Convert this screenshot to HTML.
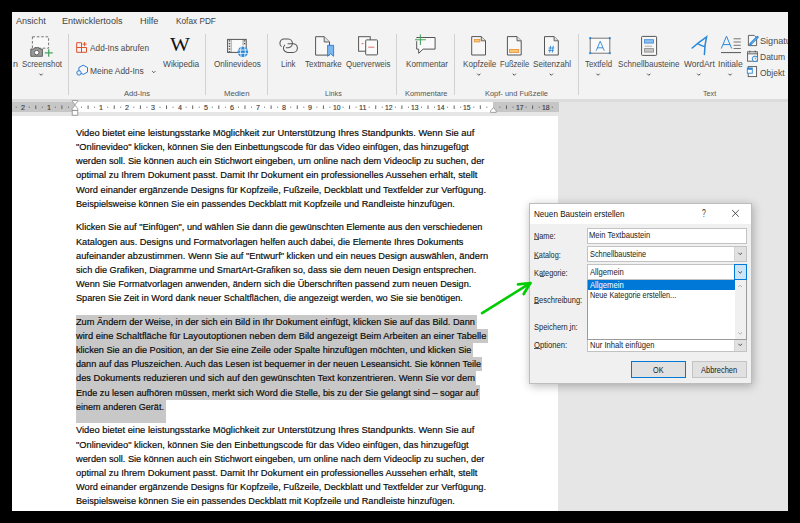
<!DOCTYPE html>
<html><head><meta charset="utf-8">
<style>
html,body{margin:0;padding:0;}
body{width:800px;height:523px;background:#000;position:relative;overflow:hidden;font-family:"Liberation Sans",sans-serif;}
.a{position:absolute;}
.t{position:absolute;white-space:pre;transform-origin:0 0;font-family:"Liberation Sans",sans-serif;}
.sep{position:absolute;width:1px;background:#d2d2d2;top:34px;height:61px;}
svg{position:absolute;overflow:visible;}
</style></head><body>
<!-- window -->
<div class="a" style="left:12px;top:12px;width:776px;height:499px;background:#f3f3f3;overflow:hidden"></div>
<!-- doc area -->
<div class="a" style="left:12px;top:99px;width:776px;height:412px;background:#e6e6e6"></div>
<!-- ruler top band -->
<div class="a" style="left:12px;top:99px;width:776px;height:3px;background:#dcdcdc"></div>
<!-- ruler body -->
<div class="a" style="left:12px;top:102px;width:546.5px;height:10px;background:#c6c6c6"></div>
<div class="a" style="left:75px;top:102px;width:418.4px;height:10px;background:#fff"></div>
<!-- page -->
<div class="a" style="left:12px;top:115.7px;width:546px;height:395.3px;background:#fff"></div>
<!-- separators -->
<div class="sep" style="left:68px"></div>
<div class="sep" style="left:205px"></div>
<div class="sep" style="left:267px"></div>
<div class="sep" style="left:396px"></div>
<div class="sep" style="left:454px"></div>
<div class="sep" style="left:578px"></div>
<div style='position:absolute;left:75.75px;top:314.64px;width:401.15px;height:14.17px;background:#c8c8c8'></div><div style='position:absolute;left:75.75px;top:328.81px;width:412.55px;height:14.17px;background:#c8c8c8'></div><div style='position:absolute;left:75.75px;top:342.98px;width:397.45px;height:14.17px;background:#c8c8c8'></div><div style='position:absolute;left:75.75px;top:357.15px;width:406.65px;height:14.17px;background:#c8c8c8'></div><div style='position:absolute;left:75.75px;top:371.32px;width:400.45px;height:14.17px;background:#c8c8c8'></div><div style='position:absolute;left:75.75px;top:385.49px;width:404.35px;height:14.17px;background:#c8c8c8'></div><div style='position:absolute;left:75.75px;top:399.66px;width:90.65px;height:23.57px;background:#c8c8c8'></div>
<!-- dialog -->
<div class="a" style="left:529px;top:203px;width:223px;height:181px;background:#f0f0f0;border:1px solid #bdbdbd;box-sizing:border-box;box-shadow:1px 2px 9px rgba(0,0,0,0.28)"></div>
<div class="a" style="left:530px;top:204px;width:221px;height:19.5px;background:#fff"></div>
<!-- name textbox -->
<div class="a" style="left:587px;top:228px;width:160px;height:15.5px;background:#fff;border:1px solid #c2c2c2;box-sizing:border-box"></div>
<!-- katalog combo -->
<div class="a" style="left:587px;top:246px;width:160px;height:15.5px;background:#fff;border:1px solid #c2c2c2;box-sizing:border-box"></div>
<div class="a" style="left:734px;top:247px;width:12px;height:13.5px;background:#e1e1e1;border-left:1px solid #d4d4d4;box-sizing:border-box"></div>
<!-- kategorie combo -->
<div class="a" style="left:587px;top:264px;width:160px;height:15.5px;background:#fff;border:1px solid #c2c2c2;box-sizing:border-box"></div>
<div class="a" style="left:734px;top:264px;width:13px;height:15.5px;background:#cce4f7;border:1px solid #0078d7;box-sizing:border-box"></div>
<!-- listbox -->
<div class="a" style="left:587px;top:279.5px;width:160px;height:60px;background:#fff;border:1px solid #9a9a9a;border-top:none;box-sizing:border-box"></div>
<div class="a" style="left:588px;top:280px;width:146.5px;height:9.5px;background:#0078d7"></div>
<div class="a" style="left:734.5px;top:280px;width:11.5px;height:58.5px;background:#f0f0f0"></div>
<!-- optionen combo -->
<div class="a" style="left:587px;top:339.5px;width:160px;height:12px;background:#fff;border:1px solid #c2c2c2;border-top:none;box-sizing:border-box"></div>
<div class="a" style="left:734px;top:339.5px;width:12px;height:11px;background:#e1e1e1;border-left:1px solid #d4d4d4;box-sizing:border-box"></div>
<!-- buttons -->
<div class="a" style="left:631px;top:361px;width:55px;height:16.5px;background:#e1e1e1;border:1px solid #0078d7;box-sizing:border-box"></div>
<div class="a" style="left:692px;top:361px;width:55px;height:16.5px;background:#e1e1e1;border:1px solid #c4c4c4;box-sizing:border-box"></div>
<svg width='800' height='523' style='left:0;top:0' viewBox='0 0 800 523'><path d='M15.71 107.2 h0.9' stroke='#555' stroke-width='1'/><path d='M28.79 107.2 h0.9' stroke='#555' stroke-width='1'/><path d='M35.78 105.4 v3.6' stroke='#555' stroke-width='0.9'/><path d='M41.86 107.2 h0.9' stroke='#555' stroke-width='1'/><path d='M54.94 107.2 h0.9' stroke='#555' stroke-width='1'/><path d='M61.92 105.4 v3.6' stroke='#555' stroke-width='0.9'/><path d='M68.01 107.2 h0.9' stroke='#555' stroke-width='1'/><path d='M81.09 107.2 h0.9' stroke='#555' stroke-width='1'/><path d='M88.08 105.4 v3.6' stroke='#555' stroke-width='0.9'/><path d='M94.16 107.2 h0.9' stroke='#555' stroke-width='1'/><path d='M107.24 107.2 h0.9' stroke='#555' stroke-width='1'/><path d='M114.22 105.4 v3.6' stroke='#555' stroke-width='0.9'/><path d='M120.31 107.2 h0.9' stroke='#555' stroke-width='1'/><path d='M133.39 107.2 h0.9' stroke='#555' stroke-width='1'/><path d='M140.38 105.4 v3.6' stroke='#555' stroke-width='0.9'/><path d='M146.46 107.2 h0.9' stroke='#555' stroke-width='1'/><path d='M159.54 107.2 h0.9' stroke='#555' stroke-width='1'/><path d='M166.52 105.4 v3.6' stroke='#555' stroke-width='0.9'/><path d='M172.61 107.2 h0.9' stroke='#555' stroke-width='1'/><path d='M185.69 107.2 h0.9' stroke='#555' stroke-width='1'/><path d='M192.68 105.4 v3.6' stroke='#555' stroke-width='0.9'/><path d='M198.76 107.2 h0.9' stroke='#555' stroke-width='1'/><path d='M211.84 107.2 h0.9' stroke='#555' stroke-width='1'/><path d='M218.82 105.4 v3.6' stroke='#555' stroke-width='0.9'/><path d='M224.91 107.2 h0.9' stroke='#555' stroke-width='1'/><path d='M237.99 107.2 h0.9' stroke='#555' stroke-width='1'/><path d='M244.97 105.4 v3.6' stroke='#555' stroke-width='0.9'/><path d='M251.06 107.2 h0.9' stroke='#555' stroke-width='1'/><path d='M264.14 107.2 h0.9' stroke='#555' stroke-width='1'/><path d='M271.12 105.4 v3.6' stroke='#555' stroke-width='0.9'/><path d='M277.21 107.2 h0.9' stroke='#555' stroke-width='1'/><path d='M290.29 107.2 h0.9' stroke='#555' stroke-width='1'/><path d='M297.27 105.4 v3.6' stroke='#555' stroke-width='0.9'/><path d='M303.36 107.2 h0.9' stroke='#555' stroke-width='1'/><path d='M316.44 107.2 h0.9' stroke='#555' stroke-width='1'/><path d='M323.42 105.4 v3.6' stroke='#555' stroke-width='0.9'/><path d='M329.51 107.2 h0.9' stroke='#555' stroke-width='1'/><path d='M342.59 107.2 h0.9' stroke='#555' stroke-width='1'/><path d='M349.57 105.4 v3.6' stroke='#555' stroke-width='0.9'/><path d='M355.66 107.2 h0.9' stroke='#555' stroke-width='1'/><path d='M368.74 107.2 h0.9' stroke='#555' stroke-width='1'/><path d='M375.72 105.4 v3.6' stroke='#555' stroke-width='0.9'/><path d='M381.81 107.2 h0.9' stroke='#555' stroke-width='1'/><path d='M394.89 107.2 h0.9' stroke='#555' stroke-width='1'/><path d='M401.88 105.4 v3.6' stroke='#555' stroke-width='0.9'/><path d='M407.96 107.2 h0.9' stroke='#555' stroke-width='1'/><path d='M421.04 107.2 h0.9' stroke='#555' stroke-width='1'/><path d='M428.02 105.4 v3.6' stroke='#555' stroke-width='0.9'/><path d='M434.11 107.2 h0.9' stroke='#555' stroke-width='1'/><path d='M447.19 107.2 h0.9' stroke='#555' stroke-width='1'/><path d='M454.17 105.4 v3.6' stroke='#555' stroke-width='0.9'/><path d='M460.26 107.2 h0.9' stroke='#555' stroke-width='1'/><path d='M473.34 107.2 h0.9' stroke='#555' stroke-width='1'/><path d='M480.32 105.4 v3.6' stroke='#555' stroke-width='0.9'/><path d='M486.41 107.2 h0.9' stroke='#555' stroke-width='1'/><path d='M499.49 107.2 h0.9' stroke='#555' stroke-width='1'/><path d='M506.47 105.4 v3.6' stroke='#555' stroke-width='0.9'/><path d='M512.56 107.2 h0.9' stroke='#555' stroke-width='1'/><path d='M525.64 107.2 h0.9' stroke='#555' stroke-width='1'/><path d='M532.62 105.4 v3.6' stroke='#555' stroke-width='0.9'/><path d='M538.71 107.2 h0.9' stroke='#555' stroke-width='1'/><path d='M551.79 107.2 h0.9' stroke='#555' stroke-width='1'/></svg><svg width="800" height="523" style="left:0;top:0" viewBox="0 0 800 523">
<!-- screenshot -->
<rect x="32.4" y="36.8" width="16.2" height="11.4" fill="#f8f8f8" stroke="#777" stroke-width="1" stroke-dasharray="2.6 1.8"/>
<path d="M30.8 49 h3 l1-1.3 h4 l1 1.3 h2.6 v7.3 h-11.6z" fill="#9a9a9a" stroke="#555" stroke-width="0.9"/>
<circle cx="36.7" cy="52.6" r="2.3" fill="#fff" stroke="#555" stroke-width="0.9"/>
<path d="M44.8 52.9 h8 M48.7 49.2 v7.6" stroke="#4aa564" stroke-width="1.3"/>
<!-- add-ins abrufen -->
<path d="M76.7 42.7 h4.8 v4.8 h5 v4.8 h-9.8z M76.7 47.5 h4.8 M81.5 47.5 v4.8" fill="none" stroke="#d9542b" stroke-width="1"/>
<path d="M84.6 42 v4.2 M82.5 44.1 h4.2" stroke="#d9542b" stroke-width="1"/>
<!-- meine add-ins -->
<path d="M83.2 65.2 L87.5 67.5 V72.1 L83.2 74.4 L78.9 72.1 V67.5z" fill="#f7f7f7" stroke="#2b7cd3" stroke-width="1" stroke-linejoin="round"/>
<circle cx="79" cy="72.9" r="2.2" fill="#f3f3f3" stroke="#2b7cd3" stroke-width="1"/>
<!-- onlinevideos -->
<rect x="227.6" y="39.4" width="18.6" height="13" fill="#fafafa" stroke="#555" stroke-width="1"/>
<path d="M231.2 39.4 v13 M243 39.4 v6" stroke="#666" stroke-width="0.6"/>
<g fill="#555"><rect x="228.7" y="40.2" width="1.5" height="1.4"/><rect x="228.7" y="42.9" width="1.5" height="1.4"/><rect x="228.7" y="45.6" width="1.5" height="1.4"/><rect x="228.7" y="48.3" width="1.5" height="1.4"/><rect x="228.7" y="51" width="1.5" height="1.2"/><rect x="243.8" y="40.2" width="1.5" height="1.4"/><rect x="243.8" y="42.9" width="1.5" height="1.4"/></g>
<circle cx="242.9" cy="51.7" r="5.3" fill="#2e8ad6"/>
<path d="M238 50 h9.8 M238 53.4 h9.8" stroke="#fff" stroke-width="0.8"/>
<path d="M241.2 46.7 q-1.6 5 0 10 M244.6 46.7 q1.6 5 0 10" fill="none" stroke="#fff" stroke-width="0.8"/>
<!-- link -->
<path d="M281.6 46.6 A4.4 4.4 0 0 1 283 38.9 H288.2 A4.4 4.4 0 0 1 292.4 43.3 A4.4 4.4 0 0 1 288.2 47.7 H285.8" fill="none" stroke="#555" stroke-width="1.05"/>
<path d="M287.6 43.7 H293 A4.4 4.4 0 0 1 297.4 48.1 A4.4 4.4 0 0 1 293 52.5 H287.8 A4.4 4.4 0 0 1 283.4 48.1 A4.4 4.4 0 0 1 285 44.8" fill="none" stroke="#555" stroke-width="1.05"/>
<!-- textmarke -->
<path d="M315.6 36.7 h8.6 l5.3 5.3 v13.1 h-13.9z" fill="#f7f7f7" stroke="#555" stroke-width="1"/>
<path d="M324.2 36.7 v5.3 h5.3" fill="#ddd" stroke="#555" stroke-width="0.9"/>
<path d="M327.6 45.3 h6 v11 l-3 -2.6 l-3 2.6z" fill="#7ab7ee" stroke="#2b7cd3" stroke-width="0.9"/>
<!-- querverweis -->
<rect x="358.6" y="36.7" width="11.6" height="14.5" fill="#fafafa" stroke="#555" stroke-width="1"/>
<rect x="365.7" y="39.9" width="11.8" height="15" rx="0.8" fill="#fafafa" stroke="#555" stroke-width="1"/>
<path d="M361.5 43.7 h2 M368.3 47.2 h6" stroke="#e05a5a" stroke-width="0.9"/>
<!-- kommentar -->
<path d="M416.7 37.5 h18.4 v11.6 h-12 l-4.4 4.2 v-4.2 h-2z" fill="#fafafa" stroke="#555" stroke-width="1"/>
<rect x="414.5" y="38.2" width="7" height="3" fill="#f3f3f3"/>
<path d="M415 39.8 h11 M420.4 34.6 v10.4" stroke="#4aa564" stroke-width="1.1"/>
<!-- kopfzeile -->
<path d="M471.7 36.6 h9.6 l4.2 4.2 v14.2 h-13.8z" fill="#f7f7f7" stroke="#555" stroke-width="1"/>
<path d="M481.3 36.6 v4.2 h4.2" fill="#ddd" stroke="#555" stroke-width="0.9"/>
<rect x="474.3" y="39.5" width="5.6" height="2.4" fill="#f7c67a" stroke="#e8902e" stroke-width="0.8"/>
<!-- fusszeile -->
<path d="M507.4 36.6 h9.6 l4.2 4.2 v14.2 h-13.8z" fill="#f7f7f7" stroke="#555" stroke-width="1"/>
<path d="M517 36.6 v4.2 h4.2" fill="#ddd" stroke="#555" stroke-width="0.9"/>
<rect x="509.4" y="49.4" width="9.3" height="3" fill="#f7c67a" stroke="#e8902e" stroke-width="0.8"/>
<!-- seitenzahl -->
<path d="M544.5 36.6 h9.6 l4.2 4.2 v14.2 h-13.8z" fill="#f7f7f7" stroke="#555" stroke-width="1"/>
<path d="M554.1 36.6 v4.2 h4.2" fill="#ddd" stroke="#555" stroke-width="0.9"/>
<path d="M550.6 45.8 l-1 6.8 M553.3 45.8 l-1 6.8 M548.6 48 h5.6 M548.2 50.4 h5.6" stroke="#2b88d8" stroke-width="0.9"/>
<!-- textfeld -->
<rect x="590.2" y="38.2" width="19.6" height="15" fill="#fafafa" stroke="#777" stroke-width="1"/>
<circle cx="590.2" cy="38.2" r="1.1" fill="#2b88d8"/><circle cx="609.8" cy="38.2" r="1.1" fill="#2b88d8"/>
<circle cx="590.2" cy="53.2" r="1.1" fill="#2b88d8"/><circle cx="609.8" cy="53.2" r="1.1" fill="#2b88d8"/>
<path d="M596.2 50.8 L600.2 41.2 L604.3 50.8 M597.5 47.8 h5.5" fill="none" stroke="#2b88d8" stroke-width="0.9"/>
<!-- schnellbausteine -->
<rect x="641.6" y="36.4" width="15" height="19" rx="0.8" fill="#f7f7f7" stroke="#555" stroke-width="1"/>
<rect x="644.6" y="39.7" width="9" height="3.4" fill="#8cc0f0" stroke="#3a86d0" stroke-width="0.8"/>
<path d="M644.6 46.2 h7.5" stroke="#999" stroke-width="0.8"/>
<rect x="644.6" y="48.6" width="9" height="3.5" fill="#c4c4c4" stroke="#888" stroke-width="0.8"/>
<!-- wordart -->
<path d="M692.2 48 Q699 42 706.6 36.8 Q704.6 45 704.4 54.4 M697.5 43.6 Q701 45.4 704.6 46.6" fill="none" stroke="#2b88d8" stroke-width="1.5" stroke-linecap="round"/>
<!-- initiale -->
<path d="M721.3 48.5 L726.5 36.2 L731.7 48.5 M723 44.6 h7" fill="none" stroke="#2b88d8" stroke-width="1"/>
<path d="M733.6 38.8 h7.2 M733.6 42 h7.2 M733.6 45.3 h7.2 M733.6 48.5 h7.2" stroke="#666" stroke-width="0.9"/>
<path d="M721 52.6 h20" stroke="#555" stroke-width="1"/>
<!-- signatur -->
<path d="M748.4 35.4 h5.8 l2.4 2.4 v7.8 h-8.2z" fill="#f7f7f7" stroke="#555" stroke-width="0.9"/>
<path d="M750.4 44.2 L757.4 37.2" stroke="#2b88d8" stroke-width="2.6" stroke-linecap="round"/>
<path d="M751 43.6 L756.8 37.8" stroke="#8cc4f2" stroke-width="0.9"/>
<!-- datum -->
<rect x="747.6" y="51.8" width="9.8" height="9.4" fill="#f7f7f7" stroke="#555" stroke-width="0.9"/>
<path d="M747.6 53.8 h9.8 M749.8 50.6 v2 M755.2 50.6 v2" stroke="#555" stroke-width="0.9"/>
<circle cx="755" cy="58.8" r="2.7" fill="#fff" stroke="#2b88d8" stroke-width="1"/>
<path d="M755 57.4 v1.5 h1.2" fill="none" stroke="#555" stroke-width="0.6"/>
<!-- objekt -->
<rect x="748.2" y="66.6" width="8.4" height="10" fill="#f7f7f7" stroke="#555" stroke-width="0.9"/>
<rect x="747.3" y="68" width="5" height="5.2" fill="#fff" stroke="#2b88d8" stroke-width="0.9"/>
<rect x="747.3" y="68" width="5" height="1.8" fill="#2b88d8"/>
<!-- chevrons -->
<g fill="none" stroke="#444" stroke-width="0.95" transform="translate(0 0.7)">
<path d="M39.5 73 l1.6 1.6 l1.6 -1.6"/>
<path d="M152.2 70.4 l1.6 1.6 l1.6 -1.6"/>
<path d="M477.2 73 l1.6 1.6 l1.6 -1.6"/>
<path d="M512.7 73 l1.6 1.6 l1.6 -1.6"/>
<path d="M549.7 73 l1.6 1.6 l1.6 -1.6"/>
<path d="M596.5 73 l1.6 1.6 l1.6 -1.6"/>
<path d="M647.2 73 l1.6 1.6 l1.6 -1.6"/>
<path d="M697.2 73 l1.6 1.6 l1.6 -1.6"/>
<path d="M728.5 73 l1.6 1.6 l1.6 -1.6"/>
</g>
<!-- dialog chevrons / close -->
<g fill="none" stroke="#444" stroke-width="0.95">
<path d="M738.4 252.8 l1.8 1.8 l1.8 -1.8"/>
<path d="M738.4 271.4 l1.8 1.8 l1.8 -1.8"/>
<path d="M738.4 287 l1.8 -1.8 l1.8 1.8" stroke="#aaa"/>
<path d="M738.4 332.4 l1.8 1.8 l1.8 -1.8" stroke="#aaa"/>
<path d="M738.4 343.8 l1.8 1.8 l1.8 -1.8"/>
</g>
<path d="M732.1 210 l6.7 6.7 M738.8 210 l-6.7 6.7" stroke="#333" stroke-width="0.85"/>
</svg>

<div class='t' style='left:15.50px;top:16.58px;font-size:9.2px;line-height:9.2px;color:#444;transform:scaleX(0.9854);'>Ansicht</div>
<div class='t' style='left:62.30px;top:16.58px;font-size:9.2px;line-height:9.2px;color:#444;transform:scaleX(0.9873);'>Entwicklertools</div>
<div class='t' style='left:140.00px;top:16.58px;font-size:9.2px;line-height:9.2px;color:#444;transform:scaleX(1.0059);'>Hilfe</div>
<div class='t' style='left:176.40px;top:16.58px;font-size:9.2px;line-height:9.2px;color:#444;transform:scaleX(0.8982);'>Kofax PDF</div>
<div class='t' style='left:12.50px;top:59.98px;font-size:8.4px;line-height:8.4px;color:#4a4a4a;transform:scaleX(1.0702);'>n</div>
<div class='t' style='left:21.50px;top:59.98px;font-size:8.4px;line-height:8.4px;color:#4a4a4a;transform:scaleX(0.9440);'>Screenshot</div>
<div class='t' style='left:162.50px;top:59.98px;font-size:8.4px;line-height:8.4px;color:#4a4a4a;transform:scaleX(0.9983);'>Wikipedia</div>
<div class='t' style='left:213.75px;top:59.98px;font-size:8.4px;line-height:8.4px;color:#4a4a4a;transform:scaleX(0.9655);'>Onlinevideos</div>
<div class='t' style='left:280.50px;top:59.98px;font-size:8.4px;line-height:8.4px;color:#4a4a4a;transform:scaleX(0.9431);'>Link</div>
<div class='t' style='left:304.50px;top:59.98px;font-size:8.4px;line-height:8.4px;color:#4a4a4a;transform:scaleX(0.9511);'>Textmarke</div>
<div class='t' style='left:345.50px;top:59.98px;font-size:8.4px;line-height:8.4px;color:#4a4a4a;transform:scaleX(0.9465);'>Querverweis</div>
<div class='t' style='left:405.50px;top:59.98px;font-size:8.4px;line-height:8.4px;color:#4a4a4a;transform:scaleX(0.9700);'>Kommentar</div>
<div class='t' style='left:462.50px;top:59.98px;font-size:8.4px;line-height:8.4px;color:#4a4a4a;transform:scaleX(0.9651);'>Kopfzeile</div>
<div class='t' style='left:500.00px;top:59.98px;font-size:8.4px;line-height:8.4px;color:#4a4a4a;transform:scaleX(0.9105);'>Fußzeile</div>
<div class='t' style='left:533.25px;top:59.98px;font-size:8.4px;line-height:8.4px;color:#4a4a4a;transform:scaleX(0.9712);'>Seitenzahl</div>
<div class='t' style='left:585.00px;top:59.98px;font-size:8.4px;line-height:8.4px;color:#4a4a4a;transform:scaleX(0.9351);'>Textfeld</div>
<div class='t' style='left:618.00px;top:59.98px;font-size:8.4px;line-height:8.4px;color:#4a4a4a;transform:scaleX(0.9640);'>Schnellbausteine</div>
<div class='t' style='left:683.75px;top:59.98px;font-size:8.4px;line-height:8.4px;color:#4a4a4a;transform:scaleX(1.0061);'>WordArt</div>
<div class='t' style='left:718.25px;top:59.98px;font-size:8.4px;line-height:8.4px;color:#4a4a4a;transform:scaleX(1.0219);'>Initiale</div>
<div class='t' style='left:90.00px;top:44.08px;font-size:8.4px;line-height:8.4px;color:#4a4a4a;transform:scaleX(0.9898);'>Add-Ins abrufen</div>
<div class='t' style='left:90.00px;top:67.08px;font-size:8.4px;line-height:8.4px;color:#4a4a4a;transform:scaleX(1.0038);'>Meine Add-Ins</div>
<div class='t' style='left:760.00px;top:37.08px;font-size:8.4px;line-height:8.4px;color:#4a4a4a;transform:scaleX(1.0896);'>Signatur</div>
<div class='t' style='left:760.00px;top:52.78px;font-size:8.4px;line-height:8.4px;color:#4a4a4a;transform:scaleX(1.0133);'>Datum</div>
<div class='t' style='left:760.00px;top:68.78px;font-size:8.4px;line-height:8.4px;color:#4a4a4a;transform:scaleX(1.0116);'>Objekt</div>
<div class='t' style='left:124.00px;top:90.08px;font-size:7.6px;line-height:7.6px;color:#555;transform:scaleX(0.9934);'>Add-Ins</div>
<div class='t' style='left:223.75px;top:90.08px;font-size:7.6px;line-height:7.6px;color:#555;transform:scaleX(1.0238);'>Medien</div>
<div class='t' style='left:324.50px;top:90.08px;font-size:7.6px;line-height:7.6px;color:#555;transform:scaleX(0.9445);'>Links</div>
<div class='t' style='left:405.00px;top:90.08px;font-size:7.6px;line-height:7.6px;color:#555;transform:scaleX(0.9774);'>Kommentare</div>
<div class='t' style='left:485.00px;top:90.08px;font-size:7.6px;line-height:7.6px;color:#555;transform:scaleX(0.9817);'>Kopf- und Fußzeile</div>
<div class='t' style='left:703.00px;top:90.08px;font-size:7.6px;line-height:7.6px;color:#555;transform:scaleX(0.9507);'>Text</div>
<div class='t' style='left:75.60px;top:127.96px;font-size:9.5px;line-height:9.5px;color:#0a0a0a;transform:scaleX(0.9816);-webkit-text-stroke:0.18px #0a0a0a;'>Video bietet eine leistungsstarke Möglichkeit zur Unterstützung Ihres Standpunkts. Wenn Sie auf</div>
<div class='t' style='left:75.60px;top:142.13px;font-size:9.5px;line-height:9.5px;color:#0a0a0a;transform:scaleX(0.9739);-webkit-text-stroke:0.18px #0a0a0a;'>"Onlinevideo" klicken, können Sie den Einbettungscode für das Video einfügen, das hinzugefügt</div>
<div class='t' style='left:75.60px;top:156.30px;font-size:9.5px;line-height:9.5px;color:#0a0a0a;transform:scaleX(0.9731);-webkit-text-stroke:0.18px #0a0a0a;'>werden soll. Sie können auch ein Stichwort eingeben, um online nach dem Videoclip zu suchen, der</div>
<div class='t' style='left:75.60px;top:170.47px;font-size:9.5px;line-height:9.5px;color:#0a0a0a;transform:scaleX(0.9834);-webkit-text-stroke:0.18px #0a0a0a;'>optimal zu Ihrem Dokument passt. Damit Ihr Dokument ein professionelles Aussehen erhält, stellt</div>
<div class='t' style='left:75.60px;top:184.64px;font-size:9.5px;line-height:9.5px;color:#0a0a0a;transform:scaleX(0.9750);-webkit-text-stroke:0.18px #0a0a0a;'>Word einander ergänzende Designs für Kopfzeile, Fußzeile, Deckblatt und Textfelder zur Verfügung.</div>
<div class='t' style='left:75.60px;top:198.81px;font-size:9.5px;line-height:9.5px;color:#0a0a0a;transform:scaleX(0.9628);-webkit-text-stroke:0.18px #0a0a0a;'>Beispielsweise können Sie ein passendes Deckblatt mit Kopfzeile und Randleiste hinzufügen.</div>
<div class='t' style='left:75.60px;top:222.38px;font-size:9.5px;line-height:9.5px;color:#0a0a0a;transform:scaleX(0.9645);-webkit-text-stroke:0.18px #0a0a0a;'>Klicken Sie auf "Einfügen", und wählen Sie dann die gewünschten Elemente aus den verschiedenen</div>
<div class='t' style='left:75.60px;top:236.55px;font-size:9.5px;line-height:9.5px;color:#0a0a0a;transform:scaleX(0.9665);-webkit-text-stroke:0.18px #0a0a0a;'>Katalogen aus. Designs und Formatvorlagen helfen auch dabei, die Elemente Ihres Dokuments</div>
<div class='t' style='left:75.60px;top:250.72px;font-size:9.5px;line-height:9.5px;color:#0a0a0a;transform:scaleX(0.9763);-webkit-text-stroke:0.18px #0a0a0a;'>aufeinander abzustimmen. Wenn Sie auf "Entwurf" klicken und ein neues Design auswählen, ändern</div>
<div class='t' style='left:75.60px;top:264.89px;font-size:9.5px;line-height:9.5px;color:#0a0a0a;transform:scaleX(0.9630);-webkit-text-stroke:0.18px #0a0a0a;'>sich die Grafiken, Diagramme und SmartArt-Grafiken so, dass sie dem neuen Design entsprechen.</div>
<div class='t' style='left:75.60px;top:279.06px;font-size:9.5px;line-height:9.5px;color:#0a0a0a;transform:scaleX(0.9678);-webkit-text-stroke:0.18px #0a0a0a;'>Wenn Sie Formatvorlagen anwenden, ändern sich die Überschriften passend zum neuen Design.</div>
<div class='t' style='left:75.60px;top:293.23px;font-size:9.5px;line-height:9.5px;color:#0a0a0a;transform:scaleX(0.9631);-webkit-text-stroke:0.18px #0a0a0a;'>Sparen Sie Zeit in Word dank neuer Schaltflächen, die angezeigt werden, wo Sie sie benötigen.</div>
<div class='t' style='left:75.60px;top:316.80px;font-size:9.5px;line-height:9.5px;color:#0a0a0a;transform:scaleX(0.9689);-webkit-text-stroke:0.18px #0a0a0a;'>Zum Ändern der Weise, in der sich ein Bild in Ihr Dokument einfügt, klicken Sie auf das Bild. Dann</div>
<div class='t' style='left:75.60px;top:330.97px;font-size:9.5px;line-height:9.5px;color:#0a0a0a;transform:scaleX(0.9828);-webkit-text-stroke:0.18px #0a0a0a;'>wird eine Schaltfläche für Layoutoptionen neben dem Bild angezeigt Beim Arbeiten an einer Tabelle</div>
<div class='t' style='left:75.60px;top:345.14px;font-size:9.5px;line-height:9.5px;color:#0a0a0a;transform:scaleX(0.9611);-webkit-text-stroke:0.18px #0a0a0a;'>klicken Sie an die Position, an der Sie eine Zeile oder Spalte hinzufügen möchten, und klicken Sie</div>
<div class='t' style='left:75.60px;top:359.31px;font-size:9.5px;line-height:9.5px;color:#0a0a0a;transform:scaleX(0.9580);-webkit-text-stroke:0.18px #0a0a0a;'>dann auf das Pluszeichen. Auch das Lesen ist bequemer in der neuen Leseansicht. Sie können Teile</div>
<div class='t' style='left:75.60px;top:373.48px;font-size:9.5px;line-height:9.5px;color:#0a0a0a;transform:scaleX(0.9780);-webkit-text-stroke:0.18px #0a0a0a;'>des Dokuments reduzieren und sich auf den gewünschten Text konzentrieren. Wenn Sie vor dem</div>
<div class='t' style='left:75.60px;top:387.65px;font-size:9.5px;line-height:9.5px;color:#0a0a0a;transform:scaleX(0.9608);-webkit-text-stroke:0.18px #0a0a0a;'>Ende zu lesen aufhören müssen, merkt sich Word die Stelle, bis zu der Sie gelangt sind – sogar auf</div>
<div class='t' style='left:75.60px;top:401.82px;font-size:9.5px;line-height:9.5px;color:#0a0a0a;transform:scaleX(0.9511);-webkit-text-stroke:0.18px #0a0a0a;'>einem anderen Gerät.</div>
<div class='t' style='left:75.60px;top:425.39px;font-size:9.5px;line-height:9.5px;color:#0a0a0a;transform:scaleX(0.9816);-webkit-text-stroke:0.18px #0a0a0a;'>Video bietet eine leistungsstarke Möglichkeit zur Unterstützung Ihres Standpunkts. Wenn Sie auf</div>
<div class='t' style='left:75.60px;top:439.56px;font-size:9.5px;line-height:9.5px;color:#0a0a0a;transform:scaleX(0.9739);-webkit-text-stroke:0.18px #0a0a0a;'>"Onlinevideo" klicken, können Sie den Einbettungscode für das Video einfügen, das hinzugefügt</div>
<div class='t' style='left:75.60px;top:453.73px;font-size:9.5px;line-height:9.5px;color:#0a0a0a;transform:scaleX(0.9731);-webkit-text-stroke:0.18px #0a0a0a;'>werden soll. Sie können auch ein Stichwort eingeben, um online nach dem Videoclip zu suchen, der</div>
<div class='t' style='left:75.60px;top:467.90px;font-size:9.5px;line-height:9.5px;color:#0a0a0a;transform:scaleX(0.9834);-webkit-text-stroke:0.18px #0a0a0a;'>optimal zu Ihrem Dokument passt. Damit Ihr Dokument ein professionelles Aussehen erhält, stellt</div>
<div class='t' style='left:75.60px;top:482.07px;font-size:9.5px;line-height:9.5px;color:#0a0a0a;transform:scaleX(0.9750);-webkit-text-stroke:0.18px #0a0a0a;'>Word einander ergänzende Designs für Kopfzeile, Fußzeile, Deckblatt und Textfelder zur Verfügung.</div>
<div class='t' style='left:75.60px;top:496.24px;font-size:9.5px;line-height:9.5px;color:#0a0a0a;transform:scaleX(0.9628);-webkit-text-stroke:0.18px #0a0a0a;'>Beispielsweise können Sie ein passendes Deckblatt mit Kopfzeile und Randleiste hinzufügen.</div>
<div class='t' style='left:170.30px;top:36.26px;font-size:18.6px;line-height:18.6px;color:#111;transform:scaleX(1.1331);font-family:"Liberation Serif",serif;'>W</div>
<div class='t' style='left:702.20px;top:207.77px;font-size:10.8px;line-height:10.8px;color:#333;transform:scaleX(0.6317);'>?</div>
<div class='t' style='left:20.70px;top:103.78px;font-size:7.4px;line-height:7.4px;color:#3a3a3a;transform:scaleX(0.9697);-webkit-text-stroke:0.15px #444;'>2</div>
<div class='t' style='left:46.85px;top:103.78px;font-size:7.4px;line-height:7.4px;color:#3a3a3a;transform:scaleX(0.9697);-webkit-text-stroke:0.15px #444;'>1</div>
<div class='t' style='left:99.15px;top:103.78px;font-size:7.4px;line-height:7.4px;color:#3a3a3a;transform:scaleX(0.9697);-webkit-text-stroke:0.15px #444;'>1</div>
<div class='t' style='left:125.30px;top:103.78px;font-size:7.4px;line-height:7.4px;color:#3a3a3a;transform:scaleX(0.9697);-webkit-text-stroke:0.15px #444;'>2</div>
<div class='t' style='left:151.45px;top:103.78px;font-size:7.4px;line-height:7.4px;color:#3a3a3a;transform:scaleX(0.9697);-webkit-text-stroke:0.15px #444;'>3</div>
<div class='t' style='left:177.60px;top:103.78px;font-size:7.4px;line-height:7.4px;color:#3a3a3a;transform:scaleX(0.9697);-webkit-text-stroke:0.15px #444;'>4</div>
<div class='t' style='left:203.75px;top:103.78px;font-size:7.4px;line-height:7.4px;color:#3a3a3a;transform:scaleX(0.9697);-webkit-text-stroke:0.15px #444;'>5</div>
<div class='t' style='left:229.90px;top:103.78px;font-size:7.4px;line-height:7.4px;color:#3a3a3a;transform:scaleX(0.9697);-webkit-text-stroke:0.15px #444;'>6</div>
<div class='t' style='left:256.05px;top:103.78px;font-size:7.4px;line-height:7.4px;color:#3a3a3a;transform:scaleX(0.9697);-webkit-text-stroke:0.15px #444;'>7</div>
<div class='t' style='left:282.20px;top:103.78px;font-size:7.4px;line-height:7.4px;color:#3a3a3a;transform:scaleX(0.9697);-webkit-text-stroke:0.15px #444;'>8</div>
<div class='t' style='left:308.35px;top:103.78px;font-size:7.4px;line-height:7.4px;color:#3a3a3a;transform:scaleX(0.9697);-webkit-text-stroke:0.15px #444;'>9</div>
<div class='t' style='left:332.70px;top:103.78px;font-size:7.4px;line-height:7.4px;color:#3a3a3a;transform:scaleX(0.9230);-webkit-text-stroke:0.15px #444;'>10</div>
<div class='t' style='left:358.85px;top:103.78px;font-size:7.4px;line-height:7.4px;color:#3a3a3a;transform:scaleX(0.9906);-webkit-text-stroke:0.15px #444;'>11</div>
<div class='t' style='left:385.00px;top:103.78px;font-size:7.4px;line-height:7.4px;color:#3a3a3a;transform:scaleX(0.9230);-webkit-text-stroke:0.15px #444;'>12</div>
<div class='t' style='left:411.15px;top:103.78px;font-size:7.4px;line-height:7.4px;color:#3a3a3a;transform:scaleX(0.9230);-webkit-text-stroke:0.15px #444;'>13</div>
<div class='t' style='left:437.30px;top:103.78px;font-size:7.4px;line-height:7.4px;color:#3a3a3a;transform:scaleX(0.9230);-webkit-text-stroke:0.15px #444;'>14</div>
<div class='t' style='left:463.45px;top:103.78px;font-size:7.4px;line-height:7.4px;color:#3a3a3a;transform:scaleX(0.9230);-webkit-text-stroke:0.15px #444;'>15</div>
<div class='t' style='left:515.75px;top:103.78px;font-size:7.4px;line-height:7.4px;color:#3a3a3a;transform:scaleX(0.9230);-webkit-text-stroke:0.15px #444;'>17</div>
<div class='t' style='left:541.90px;top:103.78px;font-size:7.4px;line-height:7.4px;color:#3a3a3a;transform:scaleX(0.9230);-webkit-text-stroke:0.15px #444;'>18</div>
<div class='t' style='left:534.40px;top:208.88px;font-size:9.8px;line-height:9.8px;color:#111;transform:scaleX(0.8276);'>Neuen Baustein erstellen</div>
<div class='t' style='left:533.80px;top:232.18px;font-size:8.4px;line-height:8.4px;color:#262626;transform:scaleX(0.8755);'>Name:</div>
<div class='t' style='left:533.80px;top:250.68px;font-size:8.4px;line-height:8.4px;color:#262626;transform:scaleX(0.8687);'>Katalog:</div>
<div class='t' style='left:533.80px;top:268.88px;font-size:8.4px;line-height:8.4px;color:#262626;transform:scaleX(0.8799);'>Kategorie:</div>
<div class='t' style='left:533.80px;top:296.18px;font-size:8.4px;line-height:8.4px;color:#262626;transform:scaleX(0.9001);'>Beschreibung:</div>
<div class='t' style='left:533.80px;top:322.98px;font-size:8.4px;line-height:8.4px;color:#262626;transform:scaleX(0.8938);'>Speichern in:</div>
<div class='t' style='left:533.80px;top:340.98px;font-size:8.4px;line-height:8.4px;color:#262626;transform:scaleX(0.9139);'>Optionen:</div>
<div class='t' style='left:588.80px;top:231.38px;font-size:8.4px;line-height:8.4px;color:#1a1a1a;transform:scaleX(0.9086);'>Mein Textbaustein</div>
<div class='t' style='left:589.80px;top:250.08px;font-size:8.4px;line-height:8.4px;color:#1a1a1a;transform:scaleX(0.8809);'>Schnellbausteine</div>
<div class='t' style='left:589.80px;top:268.38px;font-size:8.4px;line-height:8.4px;color:#1a1a1a;transform:scaleX(0.9162);'>Allgemein</div>
<div class='t' style='left:589.80px;top:281.18px;font-size:8.4px;line-height:8.4px;color:#fff;transform:scaleX(0.9162);'>Allgemein</div>
<div class='t' style='left:589.80px;top:291.48px;font-size:8.4px;line-height:8.4px;color:#1a1a1a;transform:scaleX(0.8692);'>Neue Kategorie erstellen...</div>
<div class='t' style='left:589.80px;top:340.78px;font-size:8.4px;line-height:8.4px;color:#1a1a1a;transform:scaleX(0.9127);'>Nur Inhalt einfügen</div>
<div class='t' style='left:653.00px;top:365.98px;font-size:8.4px;line-height:8.4px;color:#1a1a1a;transform:scaleX(0.8671);'>OK</div>
<div class='t' style='left:701.40px;top:365.98px;font-size:8.4px;line-height:8.4px;color:#1a1a1a;transform:scaleX(0.8935);'>Abbrechen</div>
<!-- accel underlines -->
<div class="a" style="left:533.8px;top:239.3px;width:5.2px;height:0.8px;background:#555"></div>
<div class="a" style="left:533.8px;top:257.7px;width:5px;height:0.8px;background:#555"></div>
<div class="a" style="left:539.6px;top:275.9px;width:4.2px;height:0.8px;background:#555"></div>
<div class="a" style="left:533.8px;top:303.2px;width:5px;height:0.8px;background:#555"></div>
<div class="a" style="left:568.6px;top:330px;width:2px;height:0.8px;background:#555"></div>
<div class="a" style="left:533.8px;top:348px;width:6px;height:0.8px;background:#555"></div>
<!-- ruler markers -->
<svg width="800" height="523" style="left:0;top:0" viewBox="0 0 800 523">
<path d="M72.2 100.6 h5.6 v0.6 l-2.8 3.6 l-2.8 -3.6z" fill="#fff" stroke="#8a8a8a" stroke-width="0.8"/>
<path d="M75 105.2 l2.8 3.4 v1.8 h-5.6 v-1.8z" fill="#fff" stroke="#8a8a8a" stroke-width="0.8"/>
<rect x="72.2" y="110.6" width="5.6" height="4.6" fill="#fff" stroke="#8a8a8a" stroke-width="0.8"/>
<path d="M493.4 107.6 l2.8 3.2 v1.6 h-5.6 v-1.6z" fill="#fff" stroke="#8a8a8a" stroke-width="0.8"/>
</svg>
<!-- frame -->
<div class="a" style="left:0;top:0;width:800px;height:12px;background:#000"></div>
<div class="a" style="left:0;top:511px;width:800px;height:12px;background:#000"></div>
<div class="a" style="left:0;top:0;width:12px;height:523px;background:#000"></div>
<div class="a" style="left:788px;top:0;width:12px;height:523px;background:#000"></div>
<!-- arrow -->
<svg width="800" height="523" style="left:0;top:0" viewBox="0 0 800 523">
<g stroke="#00cc00" stroke-width="2.7" stroke-linecap="round" stroke-linejoin="round" fill="none">
<path d="M482.1 313.1 L530.2 283.2"/>
<path d="M518 284.4 L530.4 283 L523.7 294"/>
</g></svg>
</body></html>
